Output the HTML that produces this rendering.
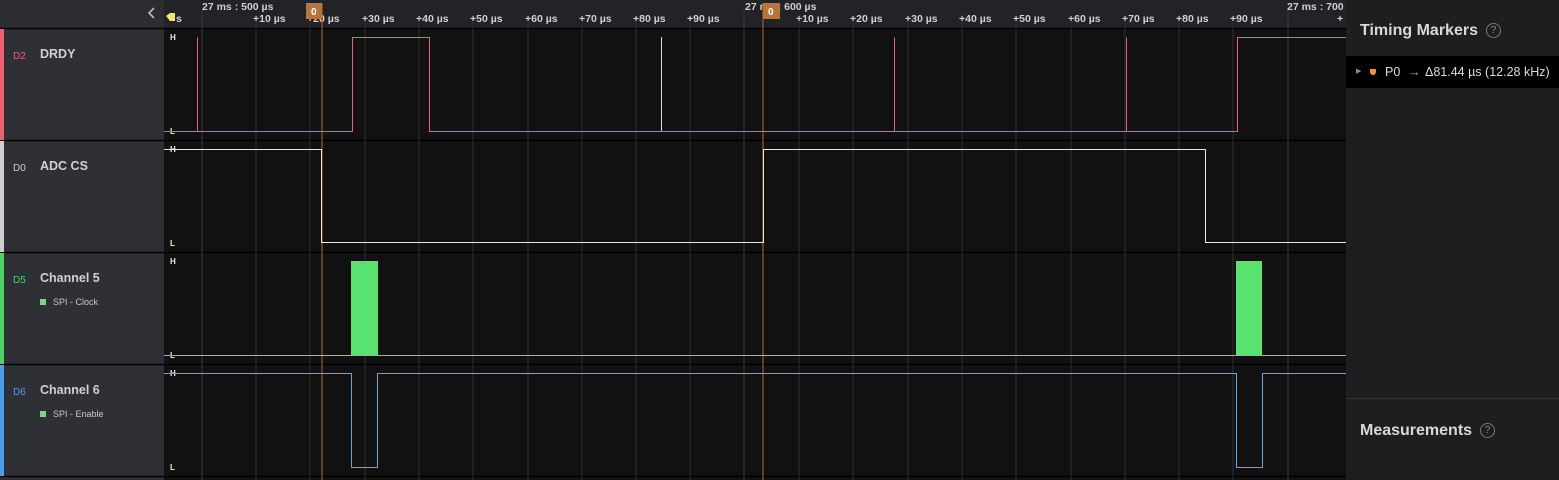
<!DOCTYPE html>
<html><head><meta charset="utf-8"><style>
body{margin:0;width:1559px;height:480px;background:#1c1c1e;overflow:hidden;font-family:"Liberation Sans",sans-serif}
.right{position:absolute;left:1346px;top:0;width:213px;height:480px;background:#1e1e20}
.h{position:absolute;left:14px;color:#d8d8da;font-size:16px;font-weight:bold}
.q{display:inline-block;width:13px;height:13px;border:1px solid #777;border-radius:50%;color:#888;font-size:10px;text-align:center;line-height:13px;font-weight:normal;margin-left:8px;vertical-align:2px}
</style></head><body>
<svg width="1346" height="480" style="position:absolute;left:0;top:0" font-family="Liberation Sans, sans-serif">
<rect x="0" y="0" width="1346" height="480" fill="#111"/>
<rect x="0" y="0" width="164" height="480" fill="#2e3036"/>
<rect x="0" y="0" width="1346" height="28" fill="#222326"/>
<rect x="0" y="0" width="164" height="28" fill="#2b2d31"/>
<path d="M154 8 L149 13 L154 18" stroke="#bbb" stroke-width="1.6" fill="none"/>
<g stroke="#000" stroke-width="1.5"><line x1="0" y1="28.5" x2="1346" y2="28.5"/><line x1="0" y1="140.5" x2="1346" y2="140.5"/><line x1="0" y1="252.5" x2="1346" y2="252.5"/><line x1="0" y1="364.5" x2="1346" y2="364.5"/><line x1="0" y1="476.5" x2="1346" y2="476.5"/></g>
<rect x="0" y="29" width="4" height="111" fill="#f06070"/>
<rect x="0" y="141" width="4" height="111" fill="#cfcfcf"/>
<rect x="0" y="253" width="4" height="111" fill="#4fd360"/>
<rect x="0" y="365" width="4" height="111" fill="#4a9ef0"/>
<g font-size="10"><text x="13" y="59" fill="#f06070">D2</text><text x="13" y="171" fill="#ccc">D0</text><text x="13" y="283" fill="#4fd360">D5</text><text x="13" y="395" fill="#4a9ef0">D6</text></g>
<g font-size="12.5" font-weight="bold" fill="#d0d0d2"><text x="40" y="58">DRDY</text><text x="40" y="170">ADC CS</text><text x="40" y="282">Channel 5</text><text x="40" y="394">Channel 6</text></g>
<rect x="40" y="299" width="6" height="6" fill="#7fd08a"/><rect x="40" y="411" width="6" height="6" fill="#7fd08a"/>
<g font-size="9" fill="#c8c8c8"><text x="53" y="305">SPI - Clock</text><text x="53" y="417">SPI - Enable</text></g>
<g stroke="#2e2e30" stroke-width="1">
<line x1="202" y1="10" x2="202" y2="480" stroke="#3a3a3c"/><line x1="744" y1="10" x2="744" y2="480" stroke="#3a3a3c"/><line x1="1288" y1="10" x2="1288" y2="480" stroke="#3a3a3c"/>
<line x1="256" y1="20" x2="256" y2="480"/><line x1="310" y1="20" x2="310" y2="480"/><line x1="365" y1="20" x2="365" y2="480"/><line x1="419" y1="20" x2="419" y2="480"/><line x1="473" y1="20" x2="473" y2="480"/><line x1="528" y1="20" x2="528" y2="480"/><line x1="582" y1="20" x2="582" y2="480"/><line x1="636" y1="20" x2="636" y2="480"/><line x1="690" y1="20" x2="690" y2="480"/>
<line x1="799" y1="20" x2="799" y2="480"/><line x1="853" y1="20" x2="853" y2="480"/><line x1="908" y1="20" x2="908" y2="480"/><line x1="962" y1="20" x2="962" y2="480"/><line x1="1016" y1="20" x2="1016" y2="480"/><line x1="1071" y1="20" x2="1071" y2="480"/><line x1="1125" y1="20" x2="1125" y2="480"/><line x1="1179" y1="20" x2="1179" y2="480"/><line x1="1233" y1="20" x2="1233" y2="480"/>
</g>
<g font-size="10.5" font-weight="bold" fill="#d0d0d0">
<text x="202" y="10">27 ms : 500 µs</text><text x="745" y="10">27 ms : 600 µs</text><text x="1287" y="10">27 ms : 700</text>
<text x="253" y="22">+10 µs</text><text x="307" y="22">+20 µs</text><text x="362" y="22">+30 µs</text><text x="416" y="22">+40 µs</text><text x="470" y="22">+50 µs</text><text x="525" y="22">+60 µs</text><text x="579" y="22">+70 µs</text><text x="633" y="22">+80 µs</text><text x="687" y="22">+90 µs</text>
<text x="796" y="22">+10 µs</text><text x="850" y="22">+20 µs</text><text x="905" y="22">+30 µs</text><text x="959" y="22">+40 µs</text><text x="1013" y="22">+50 µs</text><text x="1068" y="22">+60 µs</text><text x="1122" y="22">+70 µs</text><text x="1176" y="22">+80 µs</text><text x="1230" y="22">+90 µs</text><text x="1337" y="22">+</text><text x="176" y="22">s</text>
</g>
<path d="M166 16 L170 13 L175 13 L175 21 L170 21 Z" fill="#f3e66a"/>
<line x1="322" y1="3" x2="322" y2="480" stroke="#b86a2a"/><line x1="763" y1="3" x2="763" y2="480" stroke="#b86a2a"/>
<rect x="306" y="3" width="16" height="16" fill="#b8743a"/><rect x="763" y="3" width="17" height="16" fill="#b8743a"/>
<g font-size="10" font-weight="bold" fill="#fff"><text x="311" y="15">0</text><text x="768" y="15">0</text></g>
<g font-size="8" font-weight="bold" fill="#eee"><text x="170" y="40">H</text><text x="170" y="134">L</text><text x="170" y="152">H</text><text x="170" y="246">L</text><text x="170" y="264">H</text><text x="170" y="358">L</text><text x="170" y="376">H</text><text x="170" y="470">L</text></g>
<g fill="none" stroke-width="1">
<path d="M164 131.5 H197.5 V37.5 V131.5 H352.5 V37.5 H429.5 V131.5 H894.5 V37.5 V131.5 H1126.5 V37.5 V131.5 H1237.5 V37.5 H1346" stroke="#f06070"/>
<line x1="661.5" y1="37" x2="661.5" y2="131" stroke="#ddd"/>
<path d="M164 149.5 H321.5 V242.5 H763.5 V149.5 H1205.5 V242.5 H1346" stroke="#e8e8e8"/>
<path d="M164 355.5 H1346" stroke="#5ee06e"/>
<path d="M164 373.5 H351.5 V467.5 H377.5 V373.5 H1236.5 V467.5 H1262.5 V373.5 H1346" stroke="#5aa8f0"/>
</g>
<rect x="351" y="261" width="27" height="94" fill="#58e26e"/><rect x="1236" y="261" width="26" height="94" fill="#58e26e"/>
</svg>
<div class="right">
<div class="h" style="top:22px">Timing Markers<span class="q">?</span></div>
<div style="position:absolute;left:0;top:56px;width:213px;height:32px;background:#000;color:#ddd;font-size:12.5px;line-height:32px">
<span style="position:absolute;left:10px;color:#888;font-size:7px">▶</span>
<span style="position:absolute;left:24px;top:13px;width:6px;height:6px;background:#f0903a;border-radius:0 0 3px 3px"></span>
<span style="position:absolute;left:39px">P0</span><span style="position:absolute;left:62px;color:#aaa">→</span><span style="position:absolute;left:79px">Δ81.44 µs (12.28 kHz)</span></div>
<div style="position:absolute;left:0;top:398px;width:213px;height:1px;background:#34343a"></div>
<div class="h" style="top:422px">Measurements<span class="q">?</span></div>
</div>
</body></html>
